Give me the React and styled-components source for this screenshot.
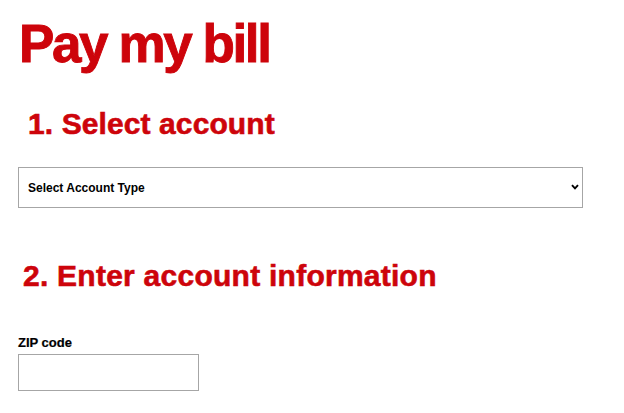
import React from 'react';
import styled, { createGlobalStyle } from 'styled-components';

const GlobalStyle = createGlobalStyle`
    html, body {
        margin: 0;
        padding: 0;
        background: #fff;
    }
    body {
        font-family: 'Liberation Sans', Arial, sans-serif;
        color: #000;
    }
`;

const red = '#cd040b';

const Page = styled.main`
    display: flex;
    flex-direction: column;
    align-items: flex-start;
    padding: 17px 0 0 18px;
`;

const Title = styled.h1`
    margin: 0 0 0 1px;
    font-size: 53px;
    line-height: 1;
    font-weight: 700;
    letter-spacing: -2.4px;
    color: ${red};
    -webkit-text-stroke: 0.9px ${red};
`;

const StepHeading = styled.h2`
    margin: ${(props) => props.$top}px 0 0;
    padding-left: ${(props) => props.$indent}px;
    font-size: 30px;
    line-height: 1;
    font-weight: 700;
    letter-spacing: ${(props) => props.$spacing || 0}px;
    color: ${red};
    -webkit-text-stroke: 0.6px ${red};
`;

const SelectWrap = styled.div`
    position: relative;
    margin-top: 28px;
    width: 565px;
    height: 41px;
`;

const Select = styled.select`
    appearance: none;
    box-sizing: border-box;
    width: 100%;
    height: 100%;
    margin: 0;
    padding: 0 30px 0 9px;
    border: 1px solid #a6a6a6;
    border-radius: 0;
    background: #fff;
    font-family: 'Liberation Sans', Arial, sans-serif;
    font-size: 12px;
    font-weight: 700;
    color: #000;
`;

const Chevron = styled.svg`
    position: absolute;
    right: 4px;
    top: 17px;
    width: 8px;
    height: 6px;
    pointer-events: none;
`;

const Label = styled.label`
    display: block;
    margin-top: 45px;
    font-size: 13px;
    line-height: 1;
    font-weight: 700;
    -webkit-text-stroke: 0.2px #000;
`;

const TextInput = styled.input`
    box-sizing: border-box;
    margin-top: 5px;
    width: 181px;
    height: 37px;
    border: 1px solid #a6a6a6;
    border-radius: 0;
    padding: 0 8px;
    font-family: 'Liberation Sans', Arial, sans-serif;
    font-size: 14px;
`;

export default function App() {
    return (
        <>
            <GlobalStyle />
            <Page>
                <Title>Pay my bill</Title>
                <StepHeading $top={39} $indent={10} $spacing={0.1}>
                    1. Select account
                </StepHeading>
                <SelectWrap>
                    <Select defaultValue="">
                        <option value="">Select Account Type</option>
                    </Select>
                    <Chevron viewBox="0 0 8 6">
                        <path d="M1 1.2 L4 4.4 L7 1.2" fill="none" stroke="#000" strokeWidth="1.9" />
                    </Chevron>
                </SelectWrap>
                <StepHeading $top={53} $indent={5} $spacing={0.25}>
                    2. Enter account information
                </StepHeading>
                <Label htmlFor="zip">ZIP code</Label>
                <TextInput id="zip" type="text" />
            </Page>
        </>
    );
}
